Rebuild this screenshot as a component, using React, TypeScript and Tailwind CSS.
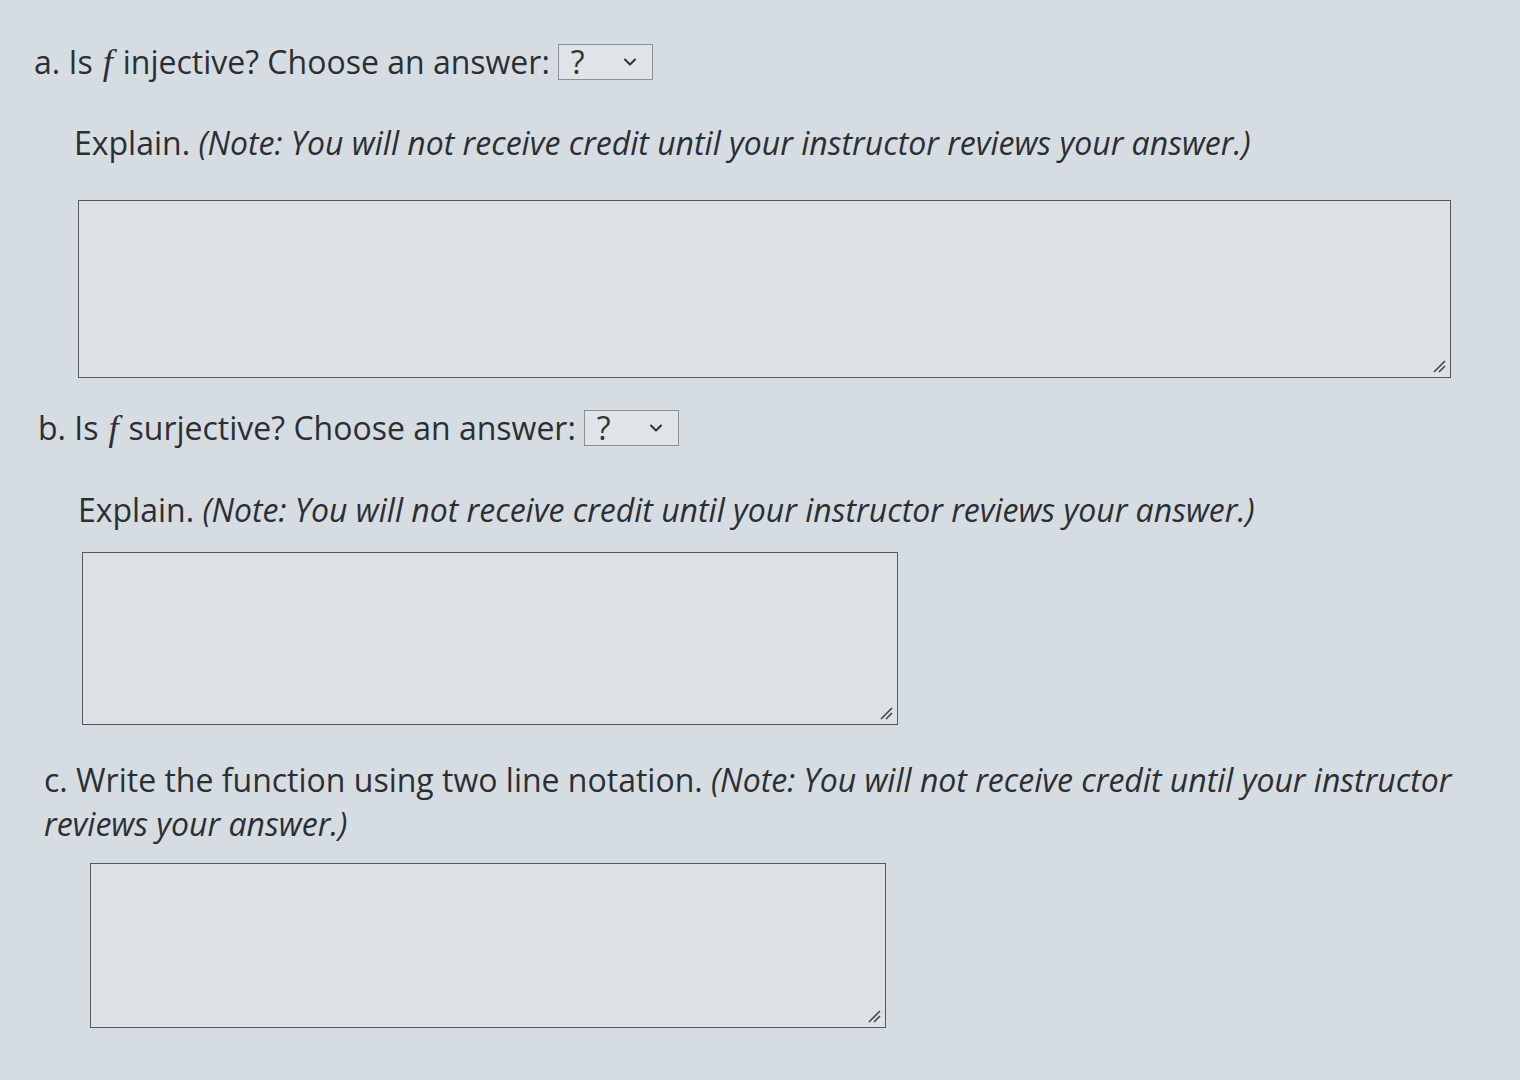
import { ChevronDown } from 'lucide-react'

const Note = () => (
	<span className="italic">
		(Note: You will not receive credit until your instructor reviews your answer.)
	</span>
)

const AnswerSelect = () => (
	<span className="ml-2 inline-flex h-[36px] w-[95px] items-center justify-between border border-[#8a9096] bg-[#dfe4e8] px-3 align-middle text-[#333]">
		<span>?</span>
		<ChevronDown className="h-5 w-5" strokeWidth={2.5} />
	</span>
)

const Box: React.FC<{ className?: string }> = ({ className }) => (
	<div
		className={
			'relative border border-[#55595d] bg-[#dbe1e5] ' + (className ?? '')
		}
	>
		<svg
			className="absolute bottom-1 right-1 h-4 w-4 text-[#444]"
			viewBox="0 0 16 16"
			fill="none"
			stroke="currentColor"
			strokeWidth="1.6"
		>
			<line x1="4" y1="15" x2="15" y2="4" />
			<line x1="9" y1="15" x2="15" y2="9" />
		</svg>
	</div>
)

const F = () => (
	<span className="mx-[10px] font-['Liberation_Serif'] text-[36px] italic">f</span>
)

export default function App() {
	return (
		<div className="min-h-[1080px] w-[1520px] bg-[#d6dde2] pl-[34px] pt-[44px] font-['Open_Sans',sans-serif] text-[32px] leading-[36px] text-[#2c2f32]">
			<div className="flex h-[36px] items-center">
				<span>
					a. Is
					<F />
					injective? Choose an answer:
				</span>
				<AnswerSelect />
			</div>
			<p className="ml-[40px] mt-[45px]">
				Explain. <Note />
			</p>
			<Box className="ml-[44px] mt-[39px] h-[178px] w-[1373px]" />

			<div className="ml-[4px] mt-[32px] flex h-[36px] items-center">
				<span>
					b. Is
					<F />
					surjective? Choose an answer:
				</span>
				<AnswerSelect />
			</div>
			<p className="ml-[44px] mt-[46px]">
				Explain. <Note />
			</p>
			<Box className="ml-[48px] mt-[24px] h-[173px] w-[816px]" />

			<div className="ml-[10px] mt-[33px] leading-[44px]">
				<p>
					c. Write the function using two line notation.{' '}
					<span className="italic">
						(Note: You will not receive credit until your instructor
					</span>
				</p>
				<p className="italic">reviews your answer.)</p>
			</div>
			<Box className="ml-[56px] mt-[17px] h-[165px] w-[796px]" />
		</div>
	)
}
